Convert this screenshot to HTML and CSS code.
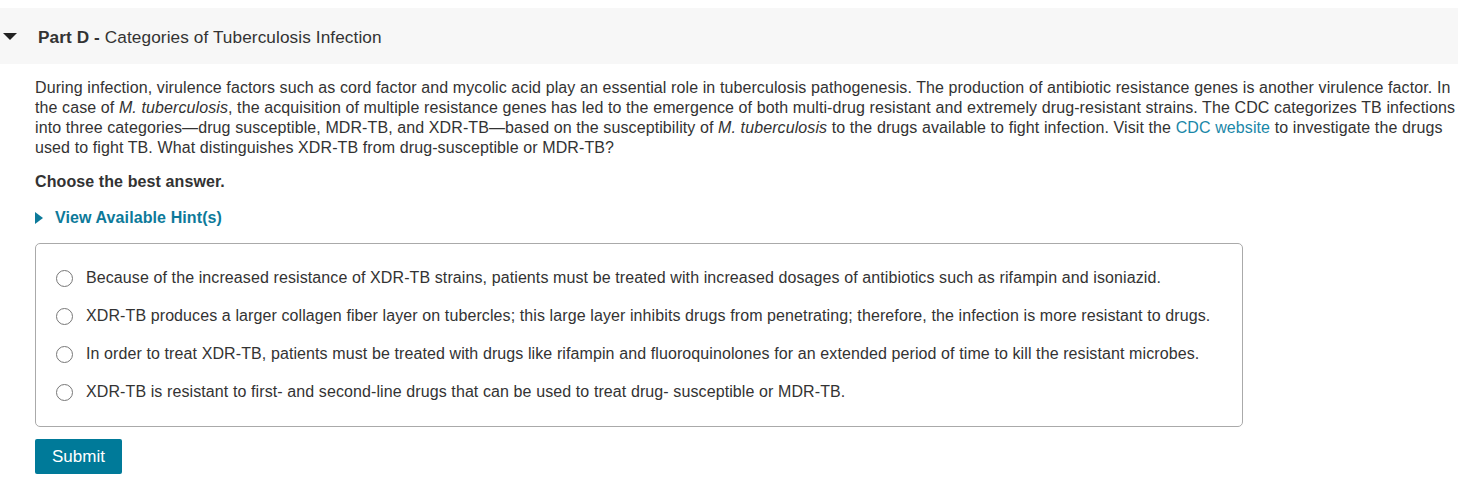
FILE: index.html
```html
<!DOCTYPE html>
<html lang="en">

<head>
    <meta charset="UTF-8" />
    <title>Part D - Categories of Tuberculosis Infection</title>
    <link rel="stylesheet" href="styles.css">
</head>

<body>

    <div class="part">
        <div class="part-header">
            <span class="caret-down" aria-hidden="true"></span>
            <h2 class="part-title"><b>Part D -</b> Categories of Tuberculosis Infection</h2>
        </div>

        <div class="part-body">
            <p class="question">During infection, virulence factors such as cord factor and mycolic acid play an essential role in tuberculosis pathogenesis. The production of antibiotic resistance genes is another virulence factor. In the case of <i>M. tuberculosis</i>, the acquisition of multiple resistance genes has led to the emergence of both multi-drug resistant and extremely drug-resistant strains. The CDC categorizes TB infections into three categories&mdash;drug susceptible, MDR-TB, and XDR-TB&mdash;based on the susceptibility of <i>M. tuberculosis</i> to the drugs available to fight infection. Visit the <a href="#" class="link">CDC website</a> to investigate the drugs used to fight TB. What distinguishes XDR-TB from drug-susceptible or MDR-TB?</p>

            <p class="instruction">Choose the best answer.</p>

            <a href="#" class="hint-toggle">
                <span class="caret-right" aria-hidden="true"></span>
                View Available Hint(s)
            </a>

            <!-- 보기 -->
            <div class="choices">
                <label class="choice">
                    <input type="radio" name="answer" class="choice-radio" />
                    <span>Because of the increased resistance of XDR-TB strains, patients must be treated with increased dosages of antibiotics such as rifampin and isoniazid.</span>
                </label>
                <label class="choice">
                    <input type="radio" name="answer" class="choice-radio" />
                    <span>XDR-TB produces a larger collagen fiber layer on tubercles; this large layer inhibits drugs from penetrating; therefore, the infection is more resistant to drugs.</span>
                </label>
                <label class="choice">
                    <input type="radio" name="answer" class="choice-radio" />
                    <span>In order to treat XDR-TB, patients must be treated with drugs like rifampin and fluoroquinolones for an extended period of time to kill the resistant microbes.</span>
                </label>
                <label class="choice">
                    <input type="radio" name="answer" class="choice-radio" />
                    <span>XDR-TB is resistant to first- and second-line drugs that can be used to treat drug- susceptible or MDR-TB.</span>
                </label>
            </div>
            <!--// 보기 -->

            <button class="submit-btn">Submit</button>
        </div>
    </div>

</body>

</html>
```

FILE: styles.css
```css
* {
    box-sizing: border-box;
}

body {
    margin: 0;
    padding-top: 8px;
    font-family: "Liberation Sans", Arial, sans-serif;
    font-size: 16px;
    line-height: 20px;
    letter-spacing: 0.1px;
    color: #333;
    background: #fff;
}

.part {
    width: calc(100% - 7px);
}

.part-header {
    display: flex;
    align-items: center;
    height: 56px;
    padding-top: 1px;
    background-color: #f7f7f7;
}

.caret-down {
    width: 0;
    height: 0;
    margin-left: 3px;
    margin-right: 21px;
    margin-top: -1px;
    border-left: 7px solid transparent;
    border-right: 7px solid transparent;
    border-top: 7px solid #222;
}

.part-title {
    margin: 0;
    font-size: 17.2px;
    font-weight: normal;
    color: #333;
}

.part-title b {
    font-weight: bold;
}

.part-body {
    padding: 14px 0 0 35px;
}

.question {
    margin: 0;
}

.link {
    color: #1a87a8;
    text-decoration: none;
}

.instruction {
    margin: 14px 0 0;
    font-weight: bold;
}

.hint-toggle {
    display: inline-flex;
    align-items: center;
    gap: 12px;
    margin-top: 16px;
    font-weight: bold;
    color: #0d7a9a;
    text-decoration: none;
}

.caret-right {
    width: 0;
    height: 0;
    border-top: 6px solid transparent;
    border-bottom: 6px solid transparent;
    border-left: 8px solid #0d7a9a;
}

.choices {
    display: flex;
    flex-direction: column;
    gap: 18px;
    width: 1208px;
    margin-top: 14px;
    padding: 24px 20px 24px;
    border: 1px solid #aaa;
    border-radius: 5px;
}

.choice {
    display: flex;
    align-items: center;
    gap: 13px;
    cursor: pointer;
}

.choice-radio {
    appearance: none;
    width: 17px;
    height: 17px;
    margin: 0;
    border: 1px solid #777;
    border-radius: 50%;
    background: #fff;
}

.submit-btn {
    display: block;
    margin-top: 12px;
    height: 35px;
    padding: 0 17px;
    border: none;
    border-radius: 2px;
    background-color: #007a99;
    color: #fff;
    font-family: inherit;
    font-size: 17px;
    cursor: pointer;
}
```
